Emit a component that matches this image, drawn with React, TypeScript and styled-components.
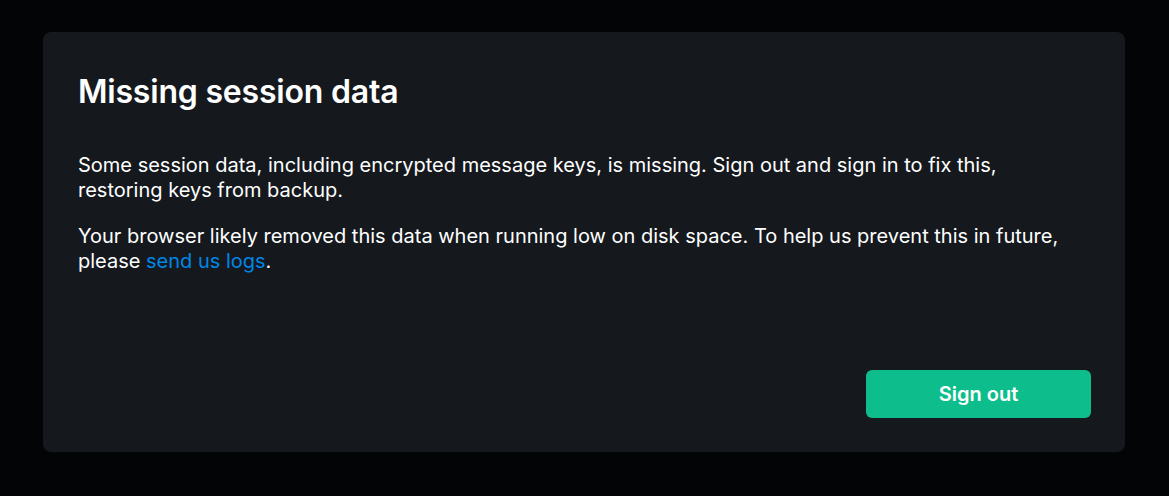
import React from "react";
import styled, { createGlobalStyle } from "styled-components";

const Global = createGlobalStyle`
  html, body { margin: 0; padding: 0; background: #030405; }
  body { font-family: Inter, "Noto Sans", sans-serif; -webkit-font-smoothing: antialiased; }
`;

const Page = styled.div`
  width: 1169px;
  height: 496px;
  box-sizing: border-box;
  padding: 32px 44px 44px 43px;
  display: flex;
`;

const Card = styled.div`
  flex: 1;
  background: #15191e;
  border-radius: 8px;
  padding: 40px 34px 34px 35px;
  display: flex;
  flex-direction: column;
  color: #ffffff;
`;

const Title = styled.h1`
  margin: 0;
  font-size: 32px;
  font-weight: 600;
  line-height: 40px;
  letter-spacing: -0.2px;
  color: #ffffff;
`;

const Body = styled.div`
  margin-top: 41px;
  padding-right: 20px;
  flex: 1;
`;

const Para = styled.p`
  margin: 0 0 22px 0;
  font-size: 20px;
  line-height: 24.5px;
  color: #ffffff;
`;

const Link = styled.a`
  color: #0086e6;
  text-decoration: none;
  cursor: pointer;
`;

const Footer = styled.div`
  display: flex;
  justify-content: flex-end;
`;

const Button = styled.button`
  width: 225px;
  height: 48px;
  border: none;
  border-radius: 6px;
  background: #0dbd8b;
  color: #ffffff;
  font-family: Inter, "Noto Sans", sans-serif;
  font-size: 20px;
  font-weight: 600;
  cursor: pointer;
`;

export default function App() {
  return (
    <>
      <Global />
      <Page>
        <Card>
          <Title>Missing session data</Title>
          <Body>
            <Para>
              Some session data, including encrypted message keys, is missing. Sign out and sign in to fix this, restoring keys from backup.
            </Para>
            <Para>
              Your browser likely removed this data when running low on disk space. To help us prevent this in future, please <Link>send us logs</Link>.
            </Para>
          </Body>
          <Footer>
            <Button>Sign out</Button>
          </Footer>
        </Card>
      </Page>
    </>
  );
}
